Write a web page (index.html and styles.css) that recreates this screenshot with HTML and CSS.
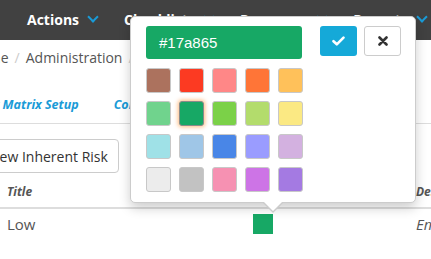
FILE: index.html
```html
<!DOCTYPE html>
<html lang="en">
<head>
    <meta charset="UTF-8">
    <meta name="viewport" content="width=device-width, initial-scale=1.0">
    <title>Risk Matrix Setup</title>
    <link rel="stylesheet" href="styles.css">
</head>
<body>
    <!-- Top navigation -->
    <header class="topbar">
        <nav class="main-nav">
            <a class="nav-item">Actions <span class="caret"></span></a>
            <a class="nav-item">Checklists <span class="caret"></span></a>
            <a class="nav-item">Processes <span class="caret"></span></a>
            <a class="nav-item">Reports <span class="caret"></span></a>
        </nav>
    </header>

    <div class="page">
        <ol class="breadcrumb">
            <li>Home</li>
            <li class="sep">/</li>
            <li>Administration</li>
            <li class="sep">/</li>
            <li>Risk Matrix</li>
        </ol>

        <ul class="tabs">
            <li class="tab">Risk Matrix Setup</li>
            <li class="tab">Consequences</li>
        </ul>

        <button class="btn-new">New Inherent Risk</button>
    </div>

    <table class="risk-table">
        <colgroup>
            <col class="col-title">
            <col class="col-colour">
            <col class="col-desc">
        </colgroup>
        <thead>
            <tr>
                <th>Title</th>
                <th></th>
                <th>Description</th>
            </tr>
        </thead>
        <tbody>
            <tr>
                <td>Low</td>
                <td><span class="colour-chip"></span></td>
                <td class="desc">Empty</td>
            </tr>
        </tbody>
    </table>

    <!-- Colour picker popover -->
    <div class="picker">
        <div class="picker-top">
            <div class="picker-value">#17a865</div>
            <button class="btn-ok">
                <svg width="13" height="10" viewBox="0 0 13 10"><path d="M1.5 5.2 L4.8 8.3 L11.5 1.6" fill="none" stroke="#fff" stroke-width="2.6" stroke-linecap="round" stroke-linejoin="round"/></svg>
            </button>
            <button class="btn-cancel">
                <svg width="10" height="10" viewBox="0 0 10 10"><path d="M1.5 1.5 L8.5 8.5 M8.5 1.5 L1.5 8.5" stroke="#333" stroke-width="2.6" stroke-linecap="round"/></svg>
            </button>
        </div>
        <div class="swatches">
            <span class="swatch" style="background:#ac725e"></span>
            <span class="swatch" style="background:#fc3a22"></span>
            <span class="swatch" style="background:#ff8787"></span>
            <span class="swatch" style="background:#ff7537"></span>
            <span class="swatch" style="background:#ffc15a"></span>
            <span class="swatch" style="background:#70d38d"></span>
            <span class="swatch selected" style="background:#17a865"></span>
            <span class="swatch" style="background:#7bd148"></span>
            <span class="swatch" style="background:#b3dc6c"></span>
            <span class="swatch" style="background:#fbe983"></span>
            <span class="swatch" style="background:#9fe1e7"></span>
            <span class="swatch" style="background:#9fc6e7"></span>
            <span class="swatch" style="background:#4986e7"></span>
            <span class="swatch" style="background:#9a9cff"></span>
            <span class="swatch" style="background:#d3b1e0"></span>
            <span class="swatch" style="background:#ececec"></span>
            <span class="swatch" style="background:#c2c2c2"></span>
            <span class="swatch" style="background:#f691b2"></span>
            <span class="swatch" style="background:#cd74e6"></span>
            <span class="swatch" style="background:#a47ae2"></span>
        </div>
        <span class="picker-arrow"></span>
    </div>
</body>
</html>
```

FILE: styles.css
```css
body {
    margin: 0;
    font-family: "Open Sans", sans-serif;
    color: #555;
    background-color: #fff;
    overflow: hidden;
    position: relative;
    height: 259px;
}

/* top bar */
.topbar {
    height: 40px;
    background-color: #414141;
}

.main-nav {
    display: flex;
    gap: 27px;
    padding-left: 27px;
    white-space: nowrap;
}

.nav-item {
    display: flex;
    align-items: center;
    gap: 10px;
    height: 38px;
    color: #fff;
    font-weight: bold;
    font-size: 14px;
}

.caret {
    width: 6px;
    height: 6px;
    border-right: 2px solid #1a9bd7;
    border-bottom: 2px solid #1a9bd7;
    transform: rotate(45deg);
    margin-top: -5px;
}

/* page */
.page {
    margin-left: -31px;
}

.breadcrumb {
    display: flex;
    gap: 6px;
    list-style: none;
    margin: 8px 0 0;
    padding: 0;
    font-size: 14px;
    line-height: 20px;
    white-space: nowrap;
}

.breadcrumb .sep {
    color: #ccc;
}

.tabs {
    display: flex;
    gap: 35px;
    list-style: none;
    margin: 27px 0 0 6px;
    padding: 0 0 8px;
    border-bottom: 1px solid #ddd;
    font-size: 12.5px;
    line-height: 20px;
    white-space: nowrap;
}

.tab {
    color: #1a9bd7;
    font-weight: bold;
    font-style: italic;
}

.btn-new {
    margin: 15px 0 0 7px;
    height: 34px;
    padding: 0 10px 0 12px;
    font-family: "Open Sans", sans-serif;
    font-size: 14px;
    color: #333;
    background: #fff;
    border: 1px solid #ccc;
    border-radius: 4px;
}

/* table */
.risk-table {
    width: 460px;
    table-layout: fixed;
    border-collapse: collapse;
    margin-top: 3px;
}

.col-title { width: 246px; }
.col-colour { width: 163px; }

.risk-table th {
    text-align: left;
    font-size: 12px;
    font-style: italic;
    font-weight: bold;
    color: #555;
    padding: 7px 7px 6px;
    line-height: 18px;
    border-bottom: 2px solid #ddd;
    white-space: nowrap;
}

.risk-table td {
    padding: 5px 7px 11px;
    font-size: 15px;
    line-height: 20px;
    white-space: nowrap;
    vertical-align: middle;
}

.risk-table .desc {
    font-style: italic;
}

.colour-chip {
    display: block;
    width: 20px;
    height: 20px;
    background-color: #17a865;
}

/* colour picker */
.picker {
    position: absolute;
    left: 130px;
    top: 16px;
    width: 255px;
    padding: 9px 14px 10px 15px;
    background: #fff;
    border: 1px solid #ccc;
    border-radius: 5px;
    box-shadow: 0 5px 12px rgba(0, 0, 0, 0.2);
}

.picker-top {
    display: flex;
    align-items: flex-start;
}

.picker-value {
    width: 143px;
    height: 33px;
    line-height: 33px;
    padding-left: 13px;
    background-color: #17a865;
    border-radius: 3px;
    color: #fff;
    font-family: "Liberation Sans", Arial, sans-serif;
    font-size: 15px;
}

.btn-ok, .btn-cancel {
    width: 37px;
    height: 30px;
    padding: 0;
    display: flex;
    align-items: center;
    justify-content: center;
    border-radius: 3px;
}

.btn-ok {
    margin-left: 18px;
    background-color: #15a9d8;
    border: none;
}

.btn-cancel {
    margin-left: 7px;
    background: #fff;
    border: 1px solid #ccc;
}

.swatches {
    display: grid;
    grid-template-columns: repeat(5, 25px);
    grid-auto-rows: 25px;
    gap: 8px;
    margin-top: 9px;
}

.swatch {
    border: 1px solid #c8c8c8;
    border-radius: 3px;
}

.swatch.selected {
    border-color: #8a8a8a;
    box-shadow: 0 0 4px 1px rgba(255, 140, 40, 0.6);
}

.picker-arrow {
    position: absolute;
    left: 131px;
    bottom: -11px;
    width: 0;
    height: 0;
    border-left: 11px solid transparent;
    border-right: 11px solid transparent;
    border-top: 11px solid #ccc;
}

.picker-arrow::after {
    content: "";
    position: absolute;
    left: -10px;
    top: -12px;
    border-left: 10px solid transparent;
    border-right: 10px solid transparent;
    border-top: 10px solid #fff;
}
```
